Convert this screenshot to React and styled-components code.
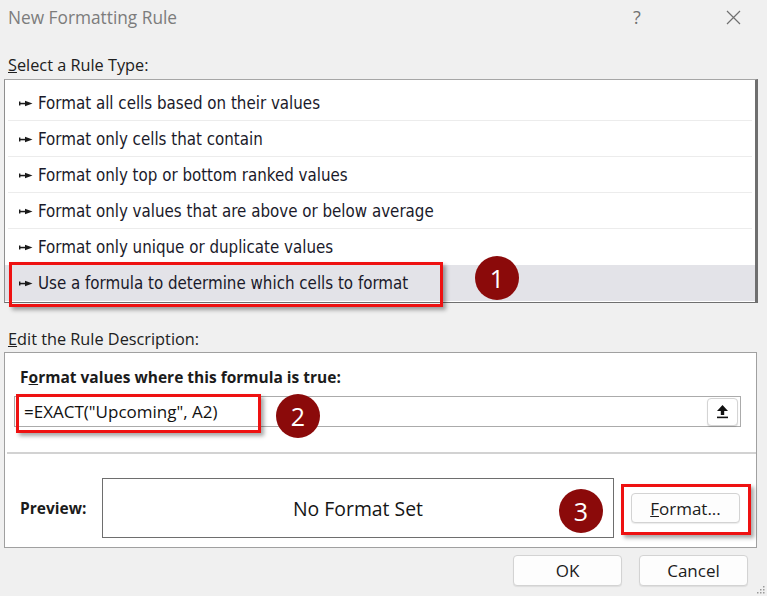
import React from "react";
import styled, { createGlobalStyle } from "styled-components";

const Global = createGlobalStyle`
  html, body { margin: 0; padding: 0; }
  body {
    background: #f0f0f0;
    font-family: "Open Sans", "Noto Sans", sans-serif;
    color: #1b1b1b;
  }
  #root { width: 767px; height: 596px; overflow: hidden; }
`;

const UI_FONT = `"Open Sans", "Noto Sans", sans-serif`;
const LIST_FONT = `"DejaVu Sans Condensed", "DejaVu Sans", sans-serif`;

const Dialog = styled.div`
  position: relative;
  width: 767px;
  height: 596px;
  background: #f0f0f0;
  display: flex;
  flex-direction: column;
`;

const TitleBar = styled.div`
  height: 34px;
  display: flex;
  align-items: center;
  padding-left: 8px;
  font-family: ${UI_FONT};
`;

const Title = styled.div`
  flex: 1;
  font-size: 17.3px;
  color: #7c7c7c;
`;

const TitleButton = styled.div`
  width: ${(p) => p.$w || 40}px;
  height: 34px;
  display: flex;
  align-items: center;
  justify-content: center;
  color: #707070;
  font-size: 18px;
  margin-left: ${(p) => p.$gap || 0}px;
`;

const Body = styled.div`
  display: flex;
  flex-direction: column;
  padding: 0 9px 0 4px;
`;

const SectionLabel = styled.div`
  font-family: ${UI_FONT};
  font-size: 16.3px;
  line-height: 20px;
  height: 20px;
  padding-left: 4px;
  margin-top: ${(p) => p.$top}px;
  margin-bottom: ${(p) => p.$bottom}px;
  color: #202020;
`;

const RuleList = styled.div`
  width: 750px;
  background: #fff;
  border-top: 1px solid #a6a6a6;
  border-left: 1px solid #8f8f8f;
  border-right: 3px solid #6f6f6f;
  border-bottom: 1px solid #6f6f6f;
  padding: 5px 0 1px;
  display: flex;
  flex-direction: column;
`;

const RuleRow = styled.div`
  position: relative;
  height: 36px;
  display: flex;
  align-items: center;
  gap: 5px;
  background: ${(p) => (p.$selected ? "#e3e3e8" : "#fff")};
  box-shadow: ${(p) => (p.$last ? "none" : "inset 0 -1px 0 #ececec")};
  margin: 0 ${(p) => (p.$selected ? 0 : 3)}px;
  padding-left: ${(p) => (p.$selected ? 14 : 11)}px;
  font-family: ${LIST_FONT};
  font-size: 16.8px;
  color: #1a1a2a;
  box-sizing: border-box;
`;

const RedBox = styled.div`
  position: absolute;
  left: ${(p) => p.$x}px;
  top: ${(p) => p.$y}px;
  width: ${(p) => p.$w}px;
  height: ${(p) => p.$h}px;
  border: 3px solid #ee1111;
  box-sizing: border-box;
  box-shadow: 3px 3px 4px rgba(0, 0, 0, 0.35);
  pointer-events: none;
`;

const Badge = styled.div`
  position: absolute;
  left: ${(p) => p.$x}px;
  top: ${(p) => p.$y}px;
  width: 44px;
  height: 44px;
  border-radius: 50%;
  background: #8b0a0a;
  color: #fff;
  display: flex;
  align-items: center;
  justify-content: center;
  font-family: ${UI_FONT};
  font-size: 25px;
  z-index: 2;
`;

const DescBox = styled.div`
  width: 751px;
  background: #fff;
  border: 1px solid #a0a0a0;
  display: flex;
  flex-direction: column;
  padding-bottom: 9px;
`;

const FormulaSection = styled.div`
  padding: 14px 0 0 9px;
  display: flex;
  flex-direction: column;
`;

const BoldLabel = styled.div`
  font-family: ${UI_FONT};
  font-weight: 700;
  font-size: 15.5px;
  line-height: 20px;
  color: #1b1b1b;
  padding-left: ${(p) => p.$indent || 0}px;
  width: ${(p) => (p.$w ? `${p.$w}px` : "auto")};
  flex-shrink: 0;
`;

const FormulaInput = styled.div`
  position: relative;
  margin-top: 9px;
  width: 727px;
  height: 31px;
  box-sizing: border-box;
  border: 1px solid #ababab;
  display: flex;
  align-items: center;
  padding: 0 2px 0 9px;
`;

const FormulaText = styled.div`
  flex: 1;
  font-family: ${UI_FONT};
  font-size: 17px;
  color: #111;
`;

const RefButton = styled.div`
  width: 31px;
  height: 28px;
  box-sizing: border-box;
  border: 1px solid #d4d4d4;
  border-radius: 4px;
  background: #fff;
  box-shadow: 0 1px 1px rgba(0, 0, 0, 0.12);
  display: flex;
  align-items: center;
  justify-content: center;
`;

const Divider = styled.div`
  height: 2px;
  background: #d2d2d2;
  margin: 25px 0 0 2px;
`;

const PreviewRow = styled.div`
  margin-top: 24px;
  display: flex;
  align-items: center;
  padding-left: 15px;
`;

const PreviewBox = styled.div`
  position: relative;
  width: 512px;
  height: 60px;
  box-sizing: border-box;
  border: 1px solid #6e6e6e;
  display: flex;
  align-items: center;
  justify-content: center;
  font-family: ${UI_FONT};
  font-size: 19.4px;
  color: #151515;
`;

const ButtonWrap = styled.div`
  position: relative;
  margin-left: ${(p) => p.$left || 0}px;
`;

const Button = styled.div`
  width: 109px;
  height: ${(p) => p.$h || 31}px;
  box-sizing: border-box;
  border: 1px solid #d3d3d3;
  border-radius: 4px;
  background: #fdfdfd;
  box-shadow: 0 1px 1px rgba(0, 0, 0, 0.08);
  display: flex;
  align-items: center;
  justify-content: center;
  font-family: ${UI_FONT};
  font-size: 17px;
  color: #1b1b1b;
`;

const Footer = styled.div`
  margin-top: 7px;
  display: flex;
  justify-content: flex-end;
  gap: 17px;
  padding-right: 10px;
`;

const Grip = styled.svg`
  position: absolute;
  right: 2px;
  bottom: 2px;
`;

const Arrow = () => (
  <svg width="14" height="7" viewBox="0 0 14 7">
    <rect x="0" y="1.5" width="1.4" height="4" fill="#1a1a1a" />
    <rect x="0" y="2.8" width="7" height="1.5" fill="#1a1a1a" />
    <polygon points="6,0.8 13.5,3.5 6,6.2" fill="#1a1a1a" />
  </svg>
);

const rules = [
  "Format all cells based on their values",
  "Format only cells that contain",
  "Format only top or bottom ranked values",
  "Format only values that are above or below average",
  "Format only unique or duplicate values",
  "Use a formula to determine which cells to format",
];

export default function App() {
  return (
    <>
      <Global />
      <Dialog>
        <TitleBar>
          <Title>New Formatting Rule</Title>
          <TitleButton>?</TitleButton>
          <TitleButton $gap={56}>
            <svg width="15" height="15" viewBox="0 0 15 15">
              <path d="M1 1 L14 14 M14 1 L1 14" stroke="#707070" strokeWidth="1.2" fill="none" />
            </svg>
          </TitleButton>
          <TitleButton $w={14} />
        </TitleBar>
        <Body>
          <SectionLabel $top={21} $bottom={4}>
            <u>S</u>elect a Rule Type:
          </SectionLabel>
          <RuleList>
            {rules.map((r, i) => {
              const selected = i === rules.length - 1;
              return (
                <RuleRow key={r} $selected={selected} $last={i >= rules.length - 2}>
                  <Arrow />
                  <span>{r}</span>
                  {selected && (
                    <>
                      <RedBox $x={4} $y={-3} $w={434} $h={45} />
                      <Badge $x={470} $y={-9}>1</Badge>
                    </>
                  )}
                </RuleRow>
              );
            })}
          </RuleList>
          <SectionLabel $top={26} $bottom={3}>
            <u>E</u>dit the Rule Description:
          </SectionLabel>
          <DescBox>
            <FormulaSection>
              <BoldLabel $indent={6}>
                F<u>o</u>rmat values where this formula is true:
              </BoldLabel>
              <FormulaInput>
                <FormulaText>=EXACT("Upcoming", A2)</FormulaText>
                <RefButton>
                  <svg width="13" height="15" viewBox="0 0 13 15">
                    <path d="M6.5 1 L12 7 L8.2 7 L8.2 11 L4.8 11 L4.8 7 L1 7 Z" fill="#111" />
                    <rect x="1" y="12.6" width="11" height="1.6" fill="#111" />
                  </svg>
                </RefButton>
                <RedBox $x={1} $y={-3} $w={245} $h={39} />
                <Badge $x={261} $y={-3}>2</Badge>
              </FormulaInput>
            </FormulaSection>
            <Divider />
            <PreviewRow>
              <BoldLabel $w={82}>Preview:</BoldLabel>
              <PreviewBox>
                No Format Set
                <Badge $x={456} $y={10}>3</Badge>
              </PreviewBox>
              <ButtonWrap $left={17}>
                <Button $h={30}>
                  <span>
                    <u>F</u>ormat...
                  </span>
                </Button>
                <RedBox $x={-10} $y={-9} $w={130} $h={51} />
              </ButtonWrap>
            </PreviewRow>
          </DescBox>
          <Footer>
            <Button>OK</Button>
            <Button>Cancel</Button>
          </Footer>
        </Body>
        <Grip width="9" height="9" viewBox="0 0 9 9">
          {[
            [7, 1], [7, 4], [4, 4], [7, 7], [4, 7], [1, 7],
          ].map(([x, y]) => (
            <rect key={`${x}-${y}`} x={x} y={y} width="1.5" height="1.5" fill="#9a9a9a" />
          ))}
        </Grip>
      </Dialog>
    </>
  );
}
